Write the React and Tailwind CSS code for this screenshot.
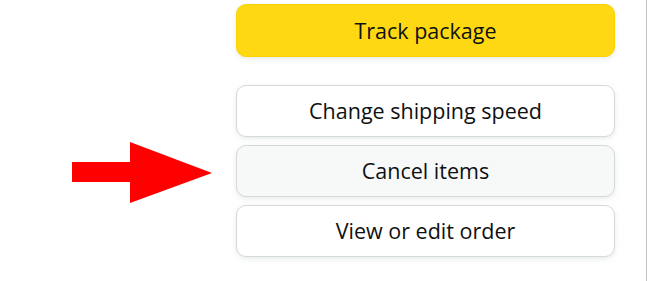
export default function App() {
  const btn =
    'h-[52px] w-full rounded-[10px] border text-[21.5px] font-medium leading-none text-[#0f1111] shadow-[0_2px_5px_0_rgba(213,217,217,0.5)] flex items-center justify-center';

  return (
    <div className="w-[649px] h-[281px] bg-white flex font-['Open_Sans',sans-serif] overflow-hidden">
      <div className="w-[236px] shrink-0 relative">
        <svg className="absolute left-[72px] top-[142px]" width="141" height="62" viewBox="0 0 141 62">
          <polygon points="0,20 58,20 58,0 140,31 58,61 58,40 0,40" fill="#ff0000" />
        </svg>
      </div>
      <div className="w-[379px] shrink-0 pt-[4px] flex flex-col">
        <button className={`${btn} h-[53px] bg-[#ffd814] border-[#fcd200]`}>Track package</button>
        <div className="mt-[28px] flex flex-col gap-[8px]">
          <button className={`${btn} bg-white border-[#d5d9d9]`}>Change shipping speed</button>
          <button className={`${btn} bg-[#f7f8f8] border-[#d5d9d9]`}>Cancel items</button>
          <button className={`${btn} bg-white border-[#d5d9d9]`}>View or edit order</button>
        </div>
      </div>
      <div className="flex-1 flex justify-end pr-[2px]">
        <div className="w-px h-full bg-[#c4c4c4]" />
      </div>
    </div>
  );
}
